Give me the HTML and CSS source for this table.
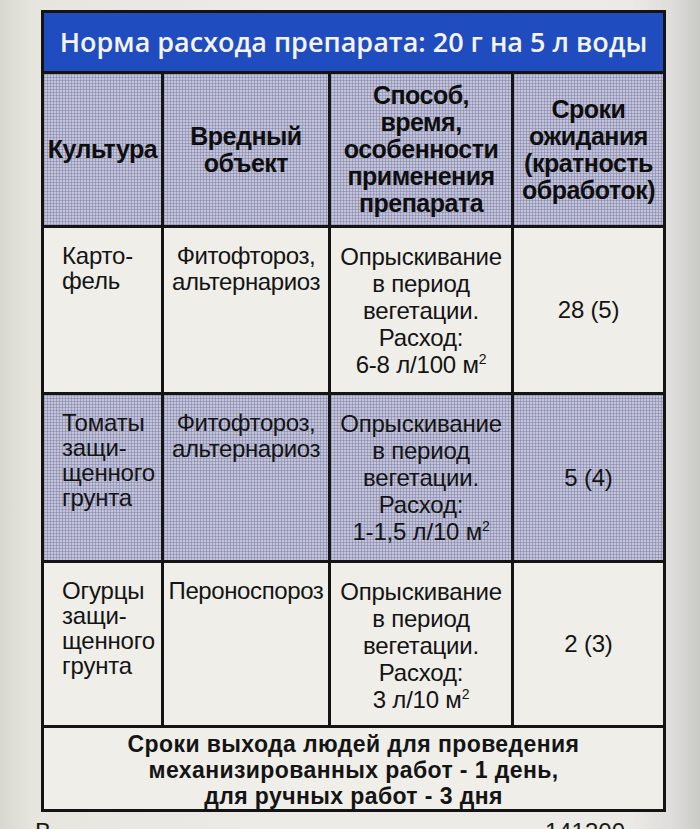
FILE: index.html
```html
<!DOCTYPE html>
<html lang="ru">
<head>
<meta charset="utf-8">
<title>Норма расхода препарата</title>
<link rel="stylesheet" href="styles.css">
</head>
<body>
<div class="page">
  <div class="label">
    <div class="title">Норма расхода препарата: 20 г на 5 л воды</div>

    <div class="head">Культура</div>
    <div class="head">Вредный<br>объект</div>
    <div class="head">Способ,<br>время,<br>особенности<br>применения<br>препарата</div>
    <div class="head">Сроки<br>ожидания<br>(кратность<br>обработок)</div>

    <div class="cell crop">Карто-<br>фель</div>
    <div class="cell pest">Фитофтороз,<br>альтернариоз</div>
    <div class="cell method">Опрыскивание<br>в период<br>вегетации.<br>Расход:<br>6-8 л/100 м<sup>2</sup></div>
    <div class="cell term">28 (5)</div>

    <div class="cell crop tint">Томаты<br>защи-<br>щенного<br>грунта</div>
    <div class="cell pest tint">Фитофтороз,<br>альтернариоз</div>
    <div class="cell method tint">Опрыскивание<br>в период<br>вегетации.<br>Расход:<br>1-1,5 л/10 м<sup>2</sup></div>
    <div class="cell term tint">5 (4)</div>

    <div class="cell crop">Огурцы<br>защи-<br>щенного<br>грунта</div>
    <div class="cell pest">Пероноспороз</div>
    <div class="cell method">Опрыскивание<br>в период<br>вегетации.<br>Расход:<br>3 л/10 м<sup>2</sup></div>
    <div class="cell term">2 (3)</div>

    <div class="footer">Сроки выхода людей для проведения<br>механизированных работ - 1 день,<br>для ручных работ - 3 дня</div>
  </div>
  <div class="cutline"><span>В</span><span>141300</span></div>
</div>
</body>
</html>
```

FILE: styles.css
```css
html, body {
  margin: 0;
  padding: 0;
}

body {
  width: 700px;
  height: 829px;
  overflow: hidden;
  background: linear-gradient(90deg, #d9d8d0 0, #e6e5de 5%, #ecebe6 40%, #ebeae5 90%, #dedddb 96%, #c9c9c6 100%);
  font-family: "Liberation Sans", Arial, sans-serif;
  color: #141414;
}

.page {
  padding-top: 10px;
  padding-left: 41px;
}

.label {
  display: grid;
  grid-template-columns: 117px 164px 180px 149px;
  grid-template-rows: 58px 151px 164px 165px 162px 81px;
  gap: 3px;
  padding: 3px;
  width: max-content;
  background: #141414;
}

.title {
  grid-column: 1 / -1;
  background: #1f4cbf;
  color: #f4f4f6;
  font-family: "Open Sans", "Noto Sans", sans-serif;
  font-weight: 600;
  font-size: 27px;
  display: flex;
  align-items: center;
  justify-content: center;
  padding-bottom: 2px;
  white-space: nowrap;
}

.head,
.tint {
  background-color: #c3c4d9;
  background-image:
    linear-gradient(90deg, rgba(118, 120, 160, 0.45) 1px, transparent 1px),
    linear-gradient(rgba(118, 120, 160, 0.45) 1px, transparent 1px);
  background-size: 3px 3px;
}

.head {
  display: flex;
  align-items: center;
  justify-content: center;
  text-align: center;
  font-weight: 700;
  font-size: 25px;
  line-height: 27px;
  letter-spacing: -0.5px;
  white-space: nowrap;
  color: #0e0e0e;
}

.cell {
  background-color: #efeee9;
  font-size: 24px;
  line-height: 26px;
  padding-top: 15px;
  white-space: nowrap;
  letter-spacing: -0.2px;
}

.cell.tint {
  background-color: #c3c4d9;
}

.crop {
  text-align: left;
  padding-left: 18px;
  line-height: 25px;
}

.pest {
  text-align: center;
  letter-spacing: -0.4px;
}

.method {
  text-align: center;
  line-height: 27px;
}

.term {
  display: flex;
  align-items: center;
  justify-content: center;
  padding-top: 0;
}

sup {
  font-size: 14px;
  line-height: 0;
  vertical-align: 9px;
}

.footer {
  grid-column: 1 / -1;
  background: #efeee9;
  display: flex;
  align-items: center;
  justify-content: center;
  text-align: center;
  font-weight: 700;
  font-size: 23px;
  line-height: 26px;
  letter-spacing: 0.4px;
  padding-top: 2px;
}

.cutline {
  display: flex;
  justify-content: space-between;
  width: 590px;
  margin-left: -6px;
  margin-top: 7px;
  font-size: 24px;
  line-height: 26px;
  color: #1a1a1a;
}
```
